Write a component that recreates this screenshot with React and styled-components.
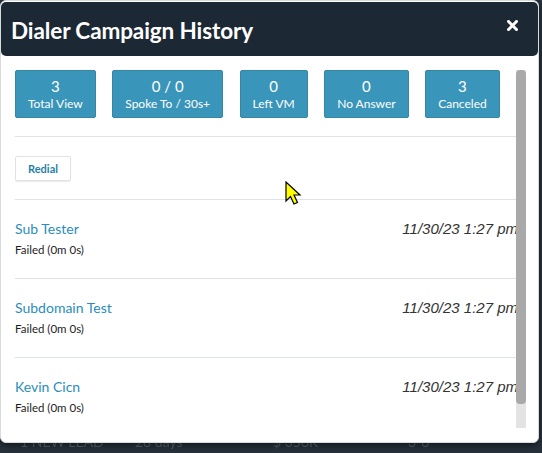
import styled, { createGlobalStyle } from "styled-components";

const GlobalStyle = createGlobalStyle`
  html, body {
    margin: 0;
    padding: 0;
    background: #26313b;
    font-family: Lato, "Open Sans", sans-serif;
    overflow: hidden;
  }
`;

const stats = [
  { value: "3", label: "Total View" },
  { value: "0 / 0", label: "Spoke To / 30s+" },
  { value: "0", label: "Left VM" },
  { value: "0", label: "No Answer" },
  { value: "3", label: "Canceled" },
];

const calls = [
  { name: "Sub Tester", status: "Failed (0m 0s)", time: "11/30/23 1:27 pm" },
  { name: "Subdomain Test", status: "Failed (0m 0s)", time: "11/30/23 1:27 pm" },
  { name: "Kevin Cicn", status: "Failed (0m 0s)", time: "11/30/23 1:27 pm" },
];

// rows of the page that sits under the dialog
const behind = [
  { text: "1 NEW LEAD", w: 115 },
  { text: "28 days", w: 138 },
  { text: "$ 350K", w: 135 },
  { text: "3-6", w: 136 },
  { text: "28", w: 20 },
];

export default function App() {
  return (
    <>
      <GlobalStyle />
      <Page>
        <Modal>
          <Header>
            <Title>Dialer Campaign History</Title>
            <CloseButton aria-label="Close">
              <svg width="11" height="11" viewBox="0 0 11 11">
                <path d="M1.5 1.5 L9.5 9.5 M9.5 1.5 L1.5 9.5" stroke="#fff" strokeWidth="3" strokeLinecap="square" />
              </svg>
            </CloseButton>
          </Header>
          <Body>
            <Scroller>
              <StatRow>
                {stats.map((s) => (
                  <StatTile key={s.label}>
                    <StatValue>{s.value}</StatValue>
                    <StatLabel>{s.label}</StatLabel>
                  </StatTile>
                ))}
              </StatRow>
              <Divider $top={18} />
              <RedialButton>Redial</RedialButton>
              <Divider $top={18} />
              {calls.map((c, i) => (
                <CallRow key={i} $last={i === calls.length - 1}>
                  <CallInfo>
                    <CallName>{c.name}</CallName>
                    <CallStatus>{c.status}</CallStatus>
                  </CallInfo>
                  <CallTime>{c.time}</CallTime>
                </CallRow>
              ))}
            </Scroller>
            <Scrollbar>
              <ScrollThumb />
            </Scrollbar>
          </Body>
        </Modal>
        <BehindRow>
          {behind.map((b) => (
            <BehindCell key={b.text} style={{ width: b.w }}>
              {b.text}
            </BehindCell>
          ))}
        </BehindRow>
        <Pointer width="20" height="26" viewBox="0 0 20 26">
          <path
            d="M1 1 L1 20 L5.5 15.5 L9 23 L12.5 21.5 L9 14 L15 14 Z"
            fill="#ffff00"
            stroke="#000"
            strokeWidth="1.2"
            strokeLinejoin="miter"
          />
        </Pointer>
      </Page>
    </>
  );
}

const Page = styled.div`
  position: relative;
  width: 542px;
  height: 453px;
  overflow: hidden;
`;

const Modal = styled.div`
  position: relative;
  z-index: 2;
  box-sizing: border-box;
  width: 539px;
  height: 443px;
  background: #fff;
  border: 1px solid #d6dadd;
  border-radius: 6px;
  box-shadow: 0 3px 6px rgba(0, 0, 0, 0.45);
  display: flex;
  flex-direction: column;
  overflow: hidden;
`;

const Header = styled.div`
  display: flex;
  align-items: center;
  justify-content: space-between;
  height: 54px;
  margin-top: 1px;
  padding: 3px 20px 0 10px;
  box-sizing: border-box;
  background: #1c2935;
  border-radius: 5px;
  flex-shrink: 0;
`;

const Title = styled.h2`
  margin: 0;
  color: #fff;
  font-size: 22.5px;
  font-weight: 700;
  letter-spacing: -0.1px;
`;

const CloseButton = styled.button`
  display: flex;
  padding: 0;
  border: none;
  background: none;
  cursor: pointer;
  margin-top: -11px;
`;

const Body = styled.div`
  flex: 1;
  display: flex;
  padding: 14px 12px 14px 14px;
  min-height: 0;
`;

const Scroller = styled.div`
  flex: 1;
  min-width: 0;
  overflow: hidden;
`;

const Scrollbar = styled.div`
  width: 10px;
  background: #e3e3e3;
  flex-shrink: 0;
`;

const ScrollThumb = styled.div`
  height: 334px;
  background: #a9a9a9;
  border-radius: 4px;
`;

const StatRow = styled.div`
  display: flex;
  gap: 16.5px;
`;

const StatTile = styled.div`
  box-sizing: border-box;
  height: 48px;
  padding: 7px 12px 0;
  background: #3a95ba;
  border: 1px solid #35869f;
  border-radius: 2px;
  color: #fff;
  text-align: center;
  white-space: nowrap;
`;

const StatValue = styled.div`
  font-size: 15px;
  line-height: 17px;
`;

const StatLabel = styled.div`
  font-size: 12px;
  line-height: 17px;
`;

const Divider = styled.hr`
  margin: ${(p) => p.$top}px 0 0;
  border: none;
  border-top: 1px solid #dde4e7;
`;

const RedialButton = styled.button`
  display: block;
  box-sizing: border-box;
  width: 56px;
  height: 25px;
  margin: 19px 0 17px;
  padding: 0;
  background: #fff;
  border: 1px solid #e2e2e2;
  border-radius: 2px;
  box-shadow: 0 1px 1px rgba(0, 0, 0, 0.08);
  color: #1f7fa9;
  font-family: Lato, sans-serif;
  font-size: 11px;
  font-weight: 700;
  cursor: pointer;
`;

const CallRow = styled.div`
  display: flex;
  justify-content: space-between;
  align-items: flex-start;
  height: 79px;
  box-sizing: border-box;
  padding-top: 20px;
  border-bottom: ${(p) => (p.$last ? "none" : "1px solid #dde4e7")};
`;

const CallInfo = styled.div`
  display: flex;
  flex-direction: column;
  gap: 6px;
`;

const CallName = styled.a`
  color: #2a8dbb;
  font-size: 14px;
  line-height: 17px;
  cursor: pointer;
`;

const CallStatus = styled.span`
  color: #1d1d1d;
  font-size: 11.5px;
  line-height: 14px;
`;

const CallTime = styled.span`
  margin-right: -2px;
  color: #333;
  font-family: "Liberation Sans", Arial, sans-serif;
  font-size: 15px;
  font-style: italic;
  line-height: 17px;
  white-space: nowrap;
`;

const BehindRow = styled.div`
  display: flex;
  margin-top: -9px;
  padding-left: 20px;
  color: #55626c;
  font-size: 14px;
  line-height: 16px;
  white-space: nowrap;
  filter: blur(0.4px);
`;

const BehindCell = styled.span`
  flex-shrink: 0;
`;

const Pointer = styled.svg`
  position: absolute;
  left: 285px;
  top: 181px;
  z-index: 3;
`;
